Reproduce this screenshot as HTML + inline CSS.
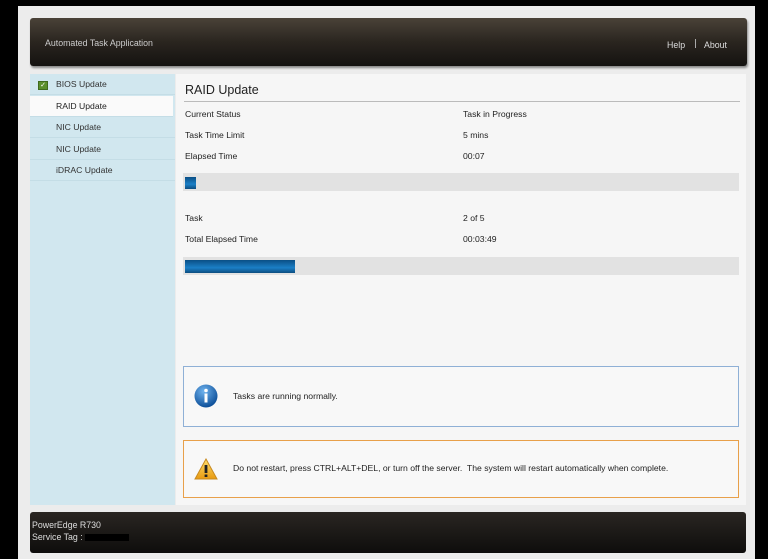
<!DOCTYPE html>
<html><head><style>
*{margin:0;padding:0;box-sizing:border-box}
body{width:768px;height:559px;background:#000;position:relative;overflow:hidden;font-family:"Liberation Sans",sans-serif;font-size:8.65px;color:#222}
.abs{position:absolute}
#panel{left:18px;top:6px;width:737px;height:553px;background:#ececec}
#hdr{left:30px;top:18px;width:717px;height:48px;border-radius:3px;background:linear-gradient(#4a4238,#2a251f 50%,#141210);box-shadow:1px 2px 2px #888}
#side{left:30px;top:74px;width:145px;height:431px;background:#d1e7ef}
#cont{left:176px;top:74px;width:570px;height:431px;background:#f6f6f6}
.si{position:absolute;left:0;width:145px;height:21px;line-height:21px;padding-left:26px;border-bottom:1px solid #c4dde6;color:#333}
.lbl{position:absolute;left:185px;color:#222}
.val{position:absolute;left:463px;color:#222}
.bar{position:absolute;left:183px;width:556px;height:18px;background:#e2e2e2}
.fill{position:absolute;background:linear-gradient(#0a4f85,#1b7fc6 60%,#0c4d80);}
.box{position:absolute;left:183px;width:556px;background:#f8f8f8}
#foot{left:30px;top:512px;width:716px;height:41px;border-radius:3px;background:linear-gradient(#2a2622,#0e0d0c);color:#ddd;font-size:8.8px;padding:7px 0 0 2px;line-height:12px}
</style></head><body>
<div id="panel" class="abs"></div>
<div id="hdr" class="abs">
<div class="abs" style="left:15px;top:20px;color:#ccc;font-size:8.8px">Automated Task Application</div>
<div class="abs" style="left:637px;top:22px;color:#ddd;font-size:8.8px">Help</div>
<div class="abs" style="left:665px;top:21px;width:1px;height:9px;background:#aaa"></div>
<div class="abs" style="left:674px;top:22px;color:#ddd;font-size:8.8px">About</div>
</div>
<div id="side" class="abs">
<div class="si" style="top:0"><span style="position:absolute;left:8px;top:7px;width:10px;height:9px;background:#5a8f2c;border:1px solid #3f6a1e;color:#fff;font-size:7px;line-height:7px;text-align:center">✓</span>BIOS Update</div>
<div class="si" style="top:22px;background:#fafafa;width:143px;color:#222">RAID Update</div>
<div class="si" style="top:43px">NIC Update</div>
<div class="si" style="top:65px">NIC Update</div>
<div class="si" style="top:86px">iDRAC Update</div>
</div>
<div id="cont" class="abs">
<div class="abs" style="left:9px;top:9px;font-size:12.5px;color:#222">RAID Update</div>
<div class="abs" style="left:8px;top:27px;width:556px;height:1px;background:#bbb"></div>
</div>
<div class="lbl" style="top:109px">Current Status</div><div class="val" style="top:109px">Task in Progress</div>
<div class="lbl" style="top:130px">Task Time Limit</div><div class="val" style="top:130px">5 mins</div>
<div class="lbl" style="top:151px">Elapsed Time</div><div class="val" style="top:151px">00:07</div>
<div class="bar" style="top:173px"></div><div class="fill" style="left:185px;top:177px;width:11px;height:12px"></div>
<div class="lbl" style="top:213px">Task</div><div class="val" style="top:213px">2 of 5</div>
<div class="lbl" style="top:234px">Total Elapsed Time</div><div class="val" style="top:234px">00:03:49</div>
<div class="bar" style="top:257px"></div><div class="fill" style="left:185px;top:260px;width:110px;height:13px"></div>
<div class="box" style="top:366px;height:61px;border:1px solid #8fb0d6"></div>
<svg class="abs" style="left:194px;top:384px" width="24" height="24"><defs><radialGradient id="g" cx=".4" cy=".3" r=".7"><stop offset="0" stop-color="#6fb3ee"/><stop offset="1" stop-color="#0d4f99"/></radialGradient></defs><circle cx="12" cy="12" r="11.5" fill="url(#g)"/><circle cx="12" cy="6.5" r="1.8" fill="#fff"/><rect x="10.5" y="9.5" width="3" height="9" fill="#fff"/></svg>
<div class="abs" style="left:233px;top:391px">Tasks are running normally.</div>
<div class="box" style="top:440px;height:58px;border:1px solid #e8a04a"></div>
<svg class="abs" style="left:194px;top:458px" width="24" height="22"><defs><linearGradient id="w" x1="0" y1="0" x2="0" y2="1"><stop offset="0" stop-color="#ffe070"/><stop offset="1" stop-color="#e89a10"/></linearGradient></defs><path d="M12 1 L23 21 L1 21 Z" fill="url(#w)" stroke="#c88a20" stroke-width="1"/><rect x="10.6" y="7" width="2.8" height="8" fill="#222"/><rect x="10.6" y="16.5" width="2.8" height="2.5" fill="#222"/></svg>
<div class="abs" style="left:233px;top:463px">Do not restart, press CTRL+ALT+DEL, or turn off the server.&nbsp; The system will restart automatically when complete.</div>
<div id="foot" class="abs">PowerEdge R730<br>Service Tag : <span style="display:inline-block;width:44px;height:7px;background:#000;vertical-align:middle"></span></div>
</body></html>
